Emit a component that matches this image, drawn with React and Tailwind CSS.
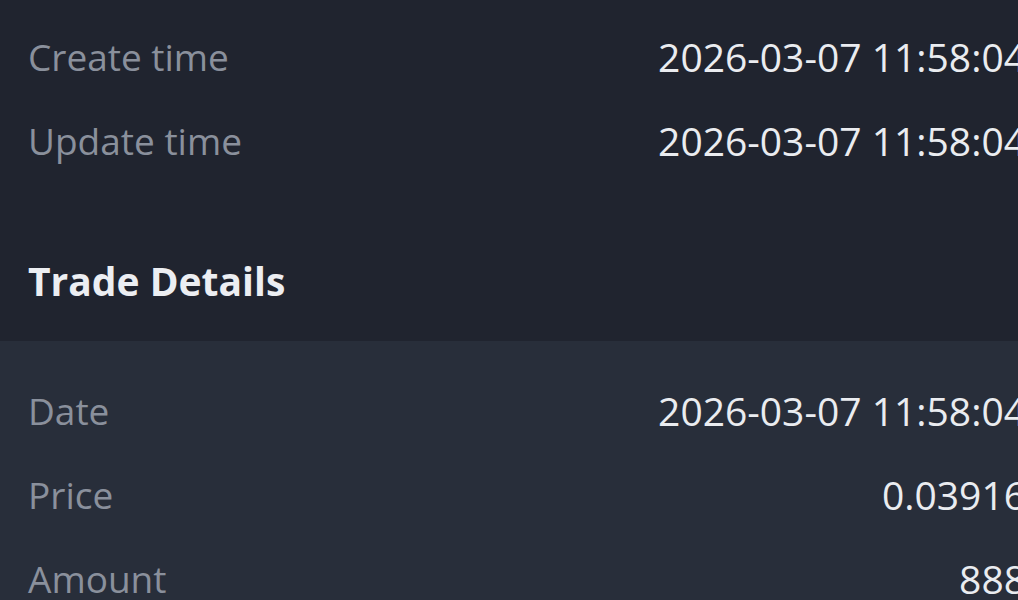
export default function App() {
  const top = [
    ['Create time', '2026-03-07 11:58:04'],
    ['Update time', '2026-03-07 11:58:04'],
  ]
  const trade = [
    ['Date', '2026-03-07 11:58:04'],
    ['Price', '0.03916'],
    ['Amount', '888'],
  ]
  return (
    <div className="w-[1018px] h-[600px] overflow-hidden bg-[#20242f]" style={{ fontFamily: '"Open Sans", sans-serif' }}>
      <div className="w-[1054px]">
        <div className="px-[28px] pt-[15px]">
          {top.map(([k, v]) => (
            <div key={k} className="flex justify-between items-center h-[84px]">
              <span className="text-[37px] text-[#8a909c]">{k}</span>
              <span className="text-[39px] text-[#eaecf0]">{v}</span>
            </div>
          ))}
          <div className="pt-[66px] pb-[28px] text-[39px] font-bold text-[#eceef2] leading-[64px]">Trade Details</div>
        </div>
        <div className="bg-[#282e3a] px-[28px] pt-[28px]">
          {trade.map(([k, v]) => (
            <div key={k} className="flex justify-between items-center h-[84px]">
              <span className="text-[37px] text-[#8a909c]">{k}</span>
              <span className="text-[39px] text-[#eaecf0]">{v}</span>
            </div>
          ))}
        </div>
      </div>
    </div>
  )
}
